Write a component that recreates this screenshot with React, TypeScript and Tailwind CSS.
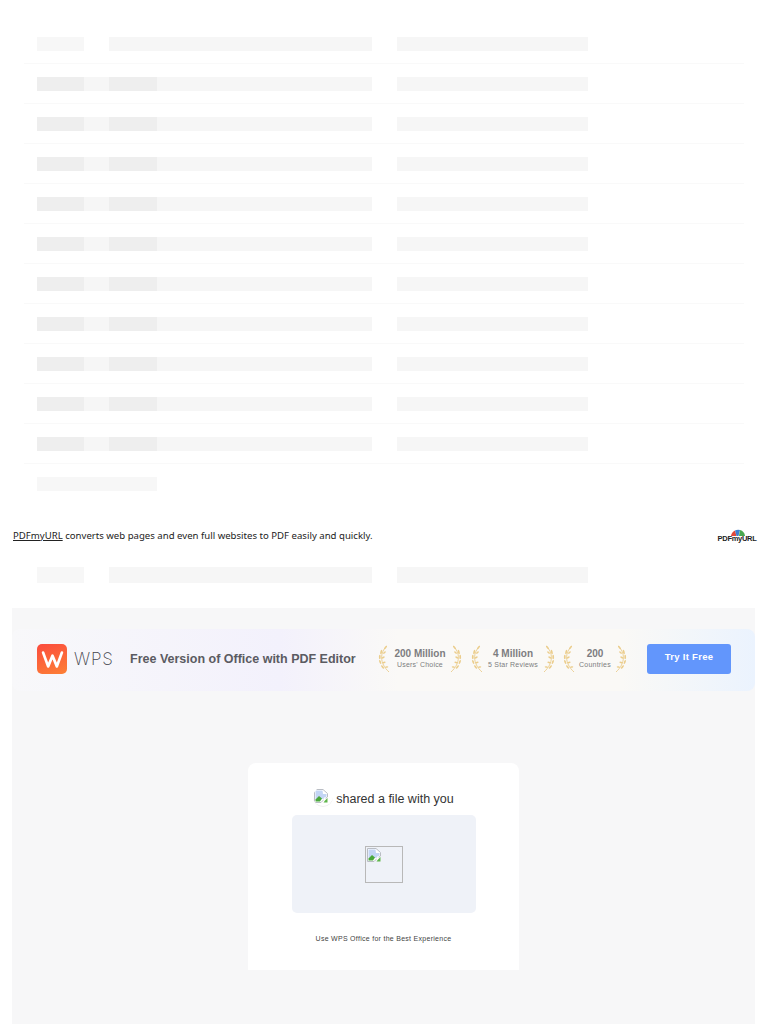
const rows = Array.from({ length: 10 }, (_, i) => i)

const awards = [
  { title: '200 Million', sub: "Users' Choice", width: 'w-[60px]', gap: 'mr-[9px]' },
  { title: '4 Million', sub: '5 Star Reviews', width: 'w-[60px]', gap: 'mr-[8px]' },
  { title: '200', sub: 'Countries', width: 'w-[40px]', gap: 'mr-0' },
]

const Laurel = ({ flip }: { flip?: boolean }) => (
  <svg viewBox="0 0 12 28" className={flip ? 'h-[28px] w-[12px] -scale-x-100' : 'h-[28px] w-[12px]'}>
    <path d="M9 1C2 7 1 18 11 27" fill="none" stroke="#ebcd8c" strokeWidth="0.9" />
    <g fill="#ebcd8c">
      <ellipse cx="7.5" cy="2.5" rx="0.9" ry="2.2" transform="rotate(40 7.5 2.5)" />
      <ellipse cx="3.2" cy="7" rx="0.9" ry="2.2" transform="rotate(15 3.2 7)" />
      <ellipse cx="6.4" cy="7.6" rx="0.8" ry="1.7" transform="rotate(55 6.4 7.6)" />
      <ellipse cx="1.8" cy="12" rx="0.9" ry="2.2" />
      <ellipse cx="5.2" cy="12.5" rx="0.8" ry="1.7" transform="rotate(60 5.2 12.5)" />
      <ellipse cx="2.2" cy="17" rx="0.9" ry="2.2" transform="rotate(-20 2.2 17)" />
      <ellipse cx="6" cy="17.5" rx="0.8" ry="1.7" transform="rotate(70 6 17.5)" />
      <ellipse cx="4.6" cy="22" rx="0.9" ry="2.2" transform="rotate(-40 4.6 22)" />
      <ellipse cx="8.6" cy="22" rx="0.8" ry="1.7" transform="rotate(80 8.6 22)" />
    </g>
  </svg>
)

const BrokenImage = () => (
  <svg viewBox="0 0 16 16" className="h-4 w-4 shrink-0">
    <path d="M1.5 1.5H10L14.5 5.5V9L11 11.5L8 14.5H1.5Z" fill="#ffffff" stroke="#b9bdc4" strokeWidth="1" />
    <path d="M2.5 2.5H9.5L10 6H13.5V8.5L10 11L2.5 11Z" fill="#c3d5f5" />
    <path d="M2.5 13.5V11.5L6 8L9 10.5L7 13.5Z" fill="#4aa83c" />
    <path d="M11.5 9L15 13.5H10.5Z" fill="#ffffff" />
    <path d="M12 12.5L14.5 10V14.5H10.5Z" fill="#5fb54a" />
  </svg>
)

const PdfLogo = () => (
  <div className="flex w-[38px] flex-col items-center">
    <svg viewBox="0 0 16 7" className="-mb-[1px] ml-[2px] h-[7px] w-[16px]">
      <path d="M1 7A7 7 0 0 1 5 1.5L6.5 7Z" fill="#e2483a" />
      <path d="M5 1.5A7 7 0 0 1 10 1L8.5 7H6.5Z" fill="#3f7fd0" />
      <path d="M10 1A7 7 0 0 1 15 7H9Z" fill="#4aa84f" />
    </svg>
    <span className="font-['Liberation_Sans',sans-serif] text-[7.5px] leading-[8px] font-bold tracking-[-0.3px] whitespace-nowrap text-[#222222]">
      PDFmyURL
    </span>
  </div>
)

export default function App() {
  return (
    <div className="flex h-[1024px] w-[768px] flex-col overflow-hidden bg-white font-['Liberation_Sans',sans-serif]">
      <div className="mx-6 mt-6 flex w-[720px] flex-col">
        <div className="flex h-10 border-b border-[#f9f9f9] pt-[13px] pl-[13px]">
          <div className="h-[14px] w-[47px] bg-[#f7f7f7]" />
          <div className="ml-[25px] h-[14px] w-[263px] bg-[#f6f6f6]" />
          <div className="ml-[25px] h-[14px] w-[191px] bg-[#f6f6f6]" />
        </div>
        {rows.map((r) => (
          <div key={r} className="flex h-10 border-b border-[#f9f9f9] pt-[13px] pl-[13px]">
            <div className="h-[14px] w-[47px] bg-[#eeeeee]" />
            <div className="h-[14px] w-[25px] bg-[#f6f6f6]" />
            <div className="h-[14px] w-[48px] bg-[#eeeeee]" />
            <div className="h-[14px] w-[215px] bg-[#f6f6f6]" />
            <div className="ml-[25px] h-[14px] w-[191px] bg-[#f6f6f6]" />
          </div>
        ))}
        <div className="flex h-10 pt-[13px] pl-[13px]">
          <div className="h-[14px] w-[120px] bg-[#f7f7f7]" />
        </div>
      </div>

      <div className="mt-[24px] flex h-[16px] items-center justify-between pr-[12px] pl-[13px]">
        <p className="-mt-[1px] font-['Noto_Sans',sans-serif] text-[9.6px] leading-[14px] text-[#222222]">
          <a className="underline">PDFmyURL</a> converts web pages and even full websites to PDF easily and quickly.
        </p>
        <PdfLogo />
      </div>

      <div className="mt-[23px] flex pl-[37px]">
        <div className="h-[16px] w-[47px] bg-[#f7f7f7]" />
        <div className="ml-[25px] h-[16px] w-[263px] bg-[#f6f6f6]" />
        <div className="ml-[25px] h-[16px] w-[191px] bg-[#f6f6f6]" />
      </div>

      <div className="mt-[25px] ml-3 flex w-[743px] flex-1 flex-col items-center bg-[#f7f7f8] pt-[21px]">
        <div className="flex h-[62px] w-full items-center rounded-lg bg-[linear-gradient(90deg,#f8f8fa_0%,#f3f1fc_36%,#faf9f7_52%,#faf9f6_82%,#ebf3fe_100%)] pb-[2px] pl-[25px]">
          <div className="flex h-[30px] w-[30px] items-center justify-center rounded-[5px] bg-[linear-gradient(160deg,#fb4b3e,#fd8035)]">
            <svg viewBox="0 0 20 20" className="h-[25px] w-[25px]">
              <path d="M2.5 4.5L6.5 15.5L10 7L13.5 15.5L17.5 4.5" fill="none" stroke="#ffffff" strokeWidth="2.2" strokeLinejoin="round" strokeLinecap="round" />
            </svg>
          </div>
          <span className="ml-[7px] w-[40px] font-['Inter',sans-serif] text-[17px] leading-[20px] font-extralight tracking-[0.8px] text-[#44444c]">
            WPS
          </span>
          <span className="-mt-[1px] ml-[16px] w-[248px] text-[12.5px] leading-[16px] font-bold text-[#5b5b62]">
            Free Version of Office with PDF Editor
          </span>
          {awards.map((a) => (
            <div key={a.title} className={`flex items-center ${a.gap}`}>
              <Laurel />
              <div className={`flex ${a.width} -mt-[1px] flex-col items-center`}>
                <span className="text-[10px] leading-[12px] font-bold text-[#7d7d80]">{a.title}</span>
                <span className="text-[7px] leading-[10px] tracking-[0.2px] text-[#7d7d80]">{a.sub}</span>
              </div>
              <Laurel flip />
            </div>
          ))}
          <button className="ml-[20px] h-[30px] w-[84px] rounded-[3px] bg-[#6296fc] pb-[4px] text-[9.5px] font-bold tracking-[0.3px] text-white">
            Try It Free
          </button>
        </div>

        <div className="mt-[72px] flex h-[207px] w-[271px] flex-col items-center rounded-t-lg bg-white pt-[24px]">
          <div className="flex h-[20px] items-center">
            <div className="mr-[3px] h-[20px] w-[20px] overflow-hidden rounded-full border-b border-[#eeeeee] bg-white pt-[1px]">
              <BrokenImage />
            </div>
            <span className="mt-[3px] text-[12.5px] leading-[16px] text-[#333333]">shared a file with you</span>
          </div>
          <div className="mt-[8px] flex h-[98px] w-[184px] items-center justify-center rounded-[5px] bg-[#eff2f8]">
            <div className="h-[37px] w-[38px] border border-[#b8b8b8] bg-[#eff2f8]">
              <BrokenImage />
            </div>
          </div>
          <span className="mt-[21px] text-[7px] leading-[10px] tracking-[0.28px] text-[#444444]">
            Use WPS Office for the Best Experience
          </span>
        </div>
      </div>
    </div>
  )
}
